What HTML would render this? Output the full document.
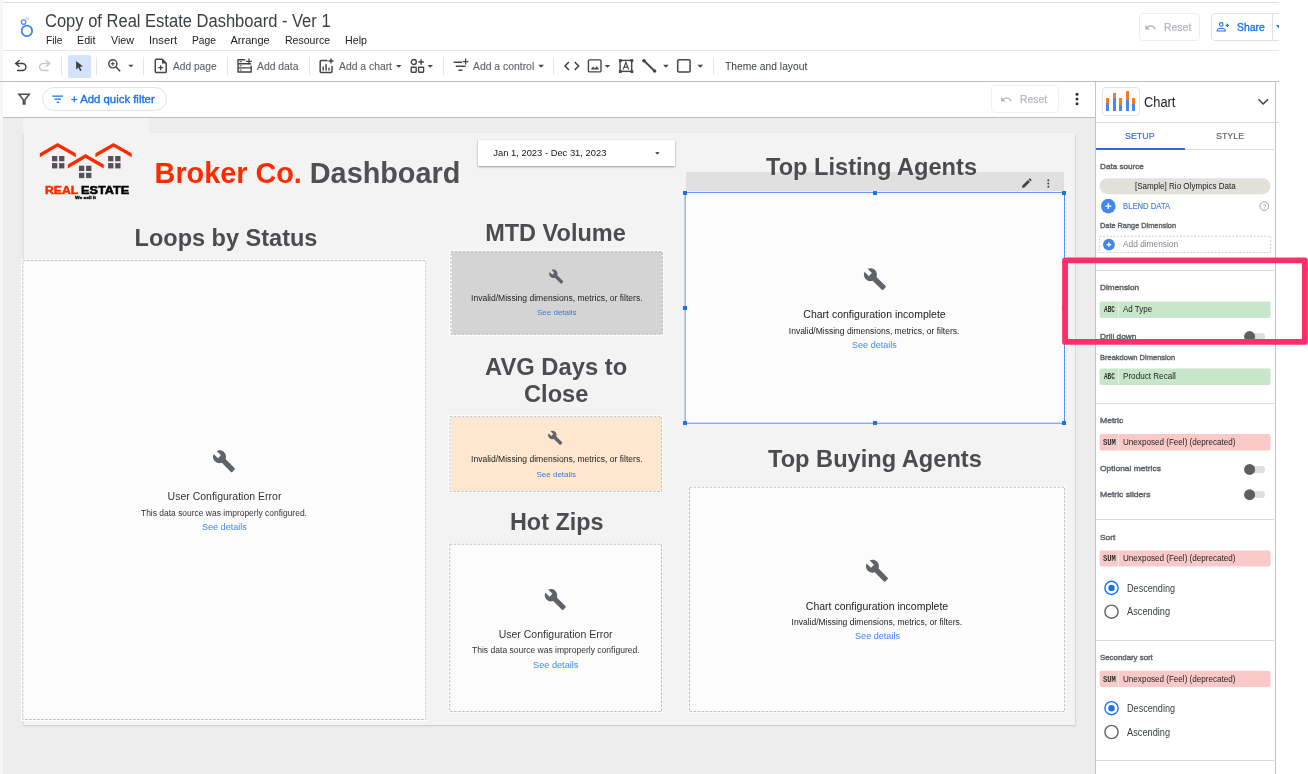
<!DOCTYPE html>
<html>
<head>
<meta charset="utf-8">
<title>Copy of Real Estate Dashboard - Ver 1</title>
<style>
*{box-sizing:border-box;margin:0;padding:0}
html,body{width:1308px;height:774px;overflow:hidden;background:#fff;font-family:"Liberation Sans",sans-serif;}
#root{position:absolute;left:0;top:0;width:1308px;height:774px;overflow:hidden;background:#fff}
.a{position:absolute}
.t{position:absolute;white-space:nowrap;line-height:1;color:#3c4043}
.c{transform:translateX(-50%)}
.hd{font-weight:bold;color:#4d4b50}
.box{position:absolute;background:#fcfcfc}
.lnk{color:#2f75e0}
svg{position:absolute;overflow:visible}
</style>
</head>
<body>
<div id="root">
<div class="a" id="clip" style="left:0;top:0;width:1279px;height:774px;overflow:hidden;will-change:transform">

<!-- ===== app chrome backgrounds ===== -->
<div class="a" style="left:0;top:0;width:3px;height:774px;background:#f4f6f9"></div>
<div class="a" style="left:3px;top:2px;width:1276px;height:1px;background:#dcdedd"></div>
<div class="a" style="left:3px;top:50px;width:1276px;height:1px;background:#e4e6e8"></div>
<div class="a" style="left:0;top:81px;width:1279px;height:1px;background:#b9bec4"></div>
<div class="a" style="left:3px;top:117px;width:1092px;height:1px;background:#b9bcc0"></div>

<!-- canvas -->
<div class="a" id="canvas" style="left:3px;top:118px;width:1092px;height:656px;background:#ededed"></div>
<div class="a" style="left:23px;top:118px;width:126px;height:16px;background:#f3f3f3"></div>
<div class="a" id="page" style="left:23px;top:133px;width:1052px;height:592px;background:#f3f3f3;box-shadow:0.5px 1px 1.5px rgba(0,0,0,.2)"></div>
<div class="a" style="left:22px;top:133px;width:2px;height:592px;background:#e4e4e4"></div>

<!-- right panel -->
<div class="a" id="panel" style="left:1095px;top:82px;width:181px;height:692px;background:#fff;border-left:1px solid #c1c5ca;border-right:1px solid #c1c5ca"></div>

<!-- header -->
<svg style="left:0px;top:0px;" width="60" height="50" viewBox="0 0 60 50"><circle cx="26.9" cy="30.8" r="5.25" fill="none" stroke="#3b82f6" stroke-width="1.8"/><circle cx="23.6" cy="22.1" r="2.200" fill="none" stroke="#4a8df8" stroke-width="1.300"/><circle cx="27.2" cy="18.7" r="1.2" fill="none" stroke="#a9c7fb" stroke-width="0.9"/><path d="M24.6 24.2 L25.6 26" stroke="#5c97f8" stroke-width="1" fill="none"/><path d="M25.4 20.6 L26.3 19.7" stroke="#9bbdfa" stroke-width="0.9" fill="none"/></svg>
<span class="t" style="left:45.0px;top:13.0px;font-size:17.5px;color:#3c4043;transform:scaleX(0.944);transform-origin:0 50%;">Copy of Real Estate Dashboard - Ver 1</span>
<span class="t" style="left:45.5px;top:35.0px;font-size:11px;color:#202124;transform:scaleX(0.930);transform-origin:0 50%;">File</span>
<span class="t" style="left:77.0px;top:35.0px;font-size:11px;color:#202124;transform:scaleX(0.975);transform-origin:0 50%;">Edit</span>
<span class="t" style="left:110.5px;top:35.0px;font-size:11px;color:#202124;transform:scaleX(0.972);transform-origin:0 50%;">View</span>
<span class="t" style="left:148.5px;top:35.0px;font-size:11px;color:#202124;transform:scaleX(1.018);transform-origin:0 50%;">Insert</span>
<span class="t" style="left:191.5px;top:35.0px;font-size:11px;color:#202124;transform:scaleX(0.934);transform-origin:0 50%;">Page</span>
<span class="t" style="left:230.5px;top:35.0px;font-size:11px;color:#202124;">Arrange</span>
<span class="t" style="left:284.5px;top:35.0px;font-size:11px;color:#202124;transform:scaleX(0.956);transform-origin:0 50%;">Resource</span>
<span class="t" style="left:345.0px;top:35.0px;font-size:11px;color:#202124;transform:scaleX(0.972);transform-origin:0 50%;">Help</span>
<div class="a" style="left:1139px;top:13px;width:61px;height:28px;background:#fff;border:1px solid #eceef0;border-radius:4px"></div>
<svg style="left:1144px;top:21px;" width="12.5" height="12.5" viewBox="0 0 24 24"><g transform="translate(0.576,0.384)"><path d="M12.5 8c-2.65 0-5.05.99-6.9 2.6L2 7v9h9l-3.62-3.62c1.39-1.16 3.16-1.88 5.12-1.88 3.54 0 6.55 2.31 7.6 5.5l2.37-.78C21.08 11.03 17.15 8 12.5 8z" fill="#b4b7bb"/></g></svg>
<span class="t" style="left:1164.0px;top:22.0px;font-size:11.5px;color:#b4b7bb;transform:scaleX(0.909);transform-origin:0 50%;-webkit-text-stroke:0.25px #b4b7bb;">Reset</span>
<div class="a" style="left:1211px;top:13px;width:80px;height:28px;background:#fff;border:1px solid #dfe1e5;border-radius:4px"></div>
<div class="a" style="left:1272px;top:14px;width:1px;height:26px;background:#dfe1e5;"></div>
<svg style="left:1216px;top:19px;" width="14" height="14" viewBox="0 0 24 24"><g transform="translate(0.000,1.371)"><circle cx="9" cy="8" r="3.1" fill="none" stroke="#1a73e8" stroke-width="1.9"/><path d="M2 19.2 v-1.2 c0-2.3 4.6-3.6 7-3.6 s7 1.3 7 3.6 v1.2z" fill="none" stroke="#1a73e8" stroke-width="1.9" stroke-linejoin="round"/><path d="M19.5 6.5v6M16.5 9.5h6" stroke="#1a73e8" stroke-width="1.9" fill="none"/></g></svg>
<span class="t" style="left:1236.5px;top:22.0px;font-size:11.5px;color:#1a73e8;transform:scaleX(0.903);transform-origin:0 50%;-webkit-text-stroke:0.35px #1a73e8;">Share</span>
<svg style="left:1276px;top:25px;" width="6" height="4" viewBox="0 0 6 4"><path d="M0 0h6L3 3.6z" fill="#1a73e8"/></svg>
<!-- toolbar -->
<svg style="left:14px;top:59px;" width="14" height="14" viewBox="0 0 14 14"><path d="M5.6 1.2 L1.6 4.5 L5.6 7.8 M1.8 4.5 H8.4 A3.5 3.5 0 0 1 8.4 11.5 H3" fill="none" stroke="#3c4043" stroke-width="1.400"/></svg>
<svg style="left:37px;top:59px;" width="14" height="14" viewBox="0 0 14 14"><g transform="translate(0.500,0.000)"><path d="M8.4 1.2 L12.4 4.5 L8.4 7.8 M12.2 4.5 H5.6 A3.5 3.5 0 0 0 5.6 11.5 H11" fill="none" stroke="#c4c7c5" stroke-width="1.400"/></g></svg>
<div class="a" style="left:61.0px;top:57px;width:1px;height:18px;background:#e3e5e8;"></div>
<div class="a" style="left:68px;top:55px;width:22.5px;height:22.5px;background:#d3e3fd;border-radius:2px"></div>
<svg style="left:75px;top:60px;" width="9" height="11" viewBox="0 0 9 11"><g transform="translate(0.500,0.500)"><path d="M0.6 0.4 L0.6 9 L2.9 6.9 L4.6 10.6 L6.1 9.9 L4.4 6.3 L7.6 6.1 Z" fill="#3c4043"/></g></svg>
<div class="a" style="left:96.2px;top:57px;width:1px;height:18px;background:#e3e5e8;"></div>
<svg style="left:107px;top:58px;" width="14" height="14" viewBox="0 0 14 14"><g transform="translate(0.500,0.500)"><circle cx="5.300" cy="5.300" r="4.100" fill="none" stroke="#444746" stroke-width="1.400"/><path d="M8.300 8.300 L12.700 12.800" stroke="#444746" stroke-width="1.600" fill="none"/><path d="M5.300 3.300v4M3.300 5.300h4" stroke="#444746" stroke-width="1.1" fill="none"/></g></svg>
<svg style="left:128px;top:64px;" width="5.400000000000006" height="2.700000000000003" viewBox="0 0 10 5"><g transform="translate(0.370,1.204)"><path d="M0 0h10L5 5z" fill="#444746"/></g></svg>
<div class="a" style="left:143.2px;top:57px;width:1px;height:18px;background:#e3e5e8;"></div>
<svg style="left:154px;top:58px;" width="14" height="16" viewBox="0 0 14 16"><path d="M2.4 1.3 H8.2 L12.2 5.3 V13.4 A1.1 1.1 0 0 1 11.1 14.5 H2.4 A1.1 1.1 0 0 1 1.3 13.4 V2.4 A1.1 1.1 0 0 1 2.4 1.3 Z" fill="none" stroke="#444746" stroke-width="1.5" stroke-linejoin="round"/><path d="M8 1.3 V5.5 H12.2 Z" fill="#444746"/><path d="M6.7 7.2v5M4.2 9.7h5" stroke="#444746" stroke-width="1.3" fill="none"/></svg>
<span class="t" style="left:173.2px;top:61.0px;font-size:11.5px;color:#5f6368;transform:scaleX(0.885);transform-origin:0 50%;-webkit-text-stroke:0.12px #5f6368;">Add page</span>
<div class="a" style="left:227.3px;top:57px;width:1px;height:18px;background:#e3e5e8;"></div>
<svg style="left:237px;top:58px;" width="16" height="16" viewBox="0 0 16 16"><path d="M8.300 1.700 H1 V14 H14.200 V7.700 M1 5.700 H14.200 M1 9.900 H14.200" fill="none" stroke="#444746" stroke-width="1.400" stroke-linejoin="round"/><path d="M12 0.500v5.800M9.100 3.400h5.800" stroke="#444746" stroke-width="1.300" fill="none"/><path d="M2.700 3.700h2M2.700 7.800h2M2.700 12h2" stroke="#444746" stroke-width="1" fill="none"/></svg>
<span class="t" style="left:257.0px;top:61.0px;font-size:11.5px;color:#5f6368;transform:scaleX(0.901);transform-origin:0 50%;-webkit-text-stroke:0.12px #5f6368;">Add data</span>
<div class="a" style="left:309.2px;top:57px;width:1px;height:18px;background:#e3e5e8;"></div>
<svg style="left:319px;top:58px;" width="15" height="16" viewBox="0 0 15 16"><path d="M8.6 2.6 H2.2 A1 1 0 0 0 1.2 3.6 V13.4 A1 1 0 0 0 2.2 14.4 H12 A1 1 0 0 0 13 13.4 V8" fill="none" stroke="#444746" stroke-width="1.5"/><path d="M12 0.4v5.2M9.4 3h5.2" stroke="#444746" stroke-width="1.4" fill="none"/><path d="M4.2 12.4v-4M7.1 12.4v-6.2M10 12.4v-2.6" stroke="#444746" stroke-width="1.5" fill="none"/></svg>
<span class="t" style="left:338.5px;top:61.0px;font-size:11.5px;color:#5f6368;transform:scaleX(0.901);transform-origin:0 50%;-webkit-text-stroke:0.12px #5f6368;">Add a chart</span>
<svg style="left:396px;top:64px;" width="5.600000000000023" height="2.8000000000000114" viewBox="0 0 10 5"><g transform="translate(0.000,1.607)"><path d="M0 0h10L5 5z" fill="#444746"/></g></svg>
<svg style="left:410px;top:58px;" width="15" height="16" viewBox="0 0 15 16"><circle cx="3.8" cy="4" r="2.5" fill="none" stroke="#444746" stroke-width="1.4"/><path d="M11.1 1.2v5.6M8.3 4h5.6" stroke="#444746" stroke-width="1.4" fill="none"/><rect x="1.2" y="9.2" width="5" height="5" rx="0.6" fill="none" stroke="#444746" stroke-width="1.4"/><rect x="8.6" y="9.2" width="5" height="5" rx="0.6" fill="none" stroke="#444746" stroke-width="1.4"/></svg>
<svg style="left:427px;top:64px;" width="5.399999999999977" height="2.6999999999999886" viewBox="0 0 10 5"><g transform="translate(1.111,1.759)"><path d="M0 0h10L5 5z" fill="#444746"/></g></svg>
<div class="a" style="left:443.2px;top:57px;width:1px;height:18px;background:#e3e5e8;"></div>
<svg style="left:453px;top:58px;" width="16" height="16" viewBox="0 0 16 16"><path d="M0.6 4.3 H9 M2.8 8.3 H12.6 M5.4 12.3 H9.4" stroke="#444746" stroke-width="1.4" fill="none"/><path d="M12.6 0.6v6M9.7 3.6h5.8" stroke="#444746" stroke-width="1.3" fill="none"/></svg>
<span class="t" style="left:472.5px;top:61.0px;font-size:11.5px;color:#5f6368;transform:scaleX(0.903);transform-origin:0 50%;-webkit-text-stroke:0.12px #5f6368;">Add a control</span>
<svg style="left:538px;top:64px;" width="5.7999999999999545" height="2.8999999999999773" viewBox="0 0 10 5"><g transform="translate(0.345,1.466)"><path d="M0 0h10L5 5z" fill="#444746"/></g></svg>
<div class="a" style="left:553.3px;top:57px;width:1px;height:18px;background:#e3e5e8;"></div>
<svg style="left:563px;top:60px;" width="17" height="12" viewBox="0 0 17 12"><g transform="translate(0.500,0.000)"><path d="M5.4 1.900 L1.500 6 L5.400 10.100 M11.200 1.900 L15.100 6 L11.200 10.100" fill="none" stroke="#3c4043" stroke-width="1.500"/></g></svg>
<svg style="left:587px;top:59px;" width="15" height="14" viewBox="0 0 15 14"><g transform="translate(0.500,0.000)"><rect x="0.9" y="0.9" width="12.6" height="12" rx="1.2" fill="none" stroke="#444746" stroke-width="1.4"/><path d="M3.2 10.6 L5.6 7.6 L7.3 9.6 L9.3 7.2 L11.6 10.6 Z" fill="#444746"/></g></svg>
<svg style="left:604px;top:64px;" width="5.600000000000023" height="2.8000000000000114" viewBox="0 0 10 5"><g transform="translate(1.071,1.607)"><path d="M0 0h10L5 5z" fill="#444746"/></g></svg>
<svg style="left:618px;top:59px;" width="15" height="14" viewBox="0 0 15 14"><g transform="translate(0.500,0.000)"><rect x="1.6" y="1.4" width="11.6" height="11" fill="none" stroke="#444746" stroke-width="1.400"/><path d="M4.600 10.600 L7.400 3.400 L10.200 10.600 M5.600 8.200 H9.200" fill="none" stroke="#444746" stroke-width="1.200"/><rect x="0.4" y="0.2" width="2.800" height="2.800" fill="#444746"/><rect x="12" y="0.2" width="2.800" height="2.800" fill="#444746"/><rect x="0.4" y="11.2" width="2.800" height="2.800" fill="#444746"/><rect x="12" y="11.2" width="2.800" height="2.800" fill="#444746"/></g></svg>
<svg style="left:642px;top:59px;" width="15" height="14" viewBox="0 0 15 14"><path d="M2 1.800 L12.600 12" stroke="#444746" stroke-width="1.900" fill="none"/><circle cx="2" cy="1.800" r="1.800" fill="#444746"/><circle cx="12.600" cy="12" r="1.800" fill="#444746"/></svg>
<svg style="left:663px;top:64px;" width="5.7999999999999545" height="2.8999999999999773" viewBox="0 0 10 5"><g transform="translate(0.000,1.466)"><path d="M0 0h10L5 5z" fill="#444746"/></g></svg>
<svg style="left:676px;top:59px;" width="15" height="14" viewBox="0 0 15 14"><g transform="translate(0.500,0.000)"><rect x="1.2" y="0.8" width="12.4" height="12.2" rx="1.2" fill="none" stroke="#444746" stroke-width="1.5"/></g></svg>
<svg style="left:697px;top:64px;" width="5.800000000000068" height="2.900000000000034" viewBox="0 0 10 5"><g transform="translate(0.690,1.466)"><path d="M0 0h10L5 5z" fill="#444746"/></g></svg>
<div class="a" style="left:713.2px;top:57px;width:1px;height:18px;background:#e3e5e8;"></div>
<span class="t" style="left:724.7px;top:61.0px;font-size:11.5px;color:#3c4043;transform:scaleX(0.894);transform-origin:0 50%;">Theme and layout</span>
<!-- filterbar -->
<svg style="left:17px;top:93px;" width="14" height="13" viewBox="0 0 14 13"><path d="M1.900 1.200 H12.300 L7.900 6.700 V11.100 H6.300 V6.700 Z" fill="none" stroke="#4a4d50" stroke-width="1.500" stroke-linejoin="miter"/></svg>
<div class="a" style="left:42px;top:87px;width:125px;height:24px;background:#fff;border:1px solid #dfe1e5;border-radius:12px"></div>
<svg style="left:52px;top:95px;" width="12" height="9" viewBox="0 0 12 9"><path d="M0.3 1.2 H11 M2.4 4.2 H9 M4.6 7.3 H7.1" stroke="#1a73e8" stroke-width="1.3" fill="none"/></svg>
<span class="t" style="left:71.0px;top:94.0px;font-size:10.5px;color:#1a73e8;transform:scaleX(1.082);transform-origin:0 50%;-webkit-text-stroke:0.35px #1a73e8;">+ Add quick filter</span>
<div class="a" style="left:991px;top:85px;width:68px;height:28px;background:#fff;border:1px solid #eef0f2;border-radius:4px"></div>
<svg style="left:1000px;top:93px;" width="12.6" height="12.6" viewBox="0 0 24 24"><g transform="translate(0.000,0.381)"><path d="M12.5 8c-2.65 0-5.05.99-6.9 2.6L2 7v9h9l-3.62-3.62c1.39-1.16 3.16-1.88 5.12-1.88 3.54 0 6.55 2.31 7.6 5.5l2.37-.78C21.08 11.03 17.15 8 12.5 8z" fill="#b4b7bb"/></g></svg>
<span class="t" style="left:1019.5px;top:94.0px;font-size:11.5px;color:#b4b7bb;transform:scaleX(0.902);transform-origin:0 50%;-webkit-text-stroke:0.25px #b4b7bb;">Reset</span>
<svg style="left:1075px;top:92px;" width="4" height="14" viewBox="0 0 4 14"><circle cx="2" cy="2.200" r="1.500" fill="#303134"/><circle cx="2" cy="7" r="1.500" fill="#303134"/><circle cx="2" cy="11.800" r="1.500" fill="#303134"/></svg>
<!-- dash -->
<svg style="left:0px;top:0px;" width="200" height="220" viewBox="0 0 200 220"><path d="M39.8 153.3 L57.6 142.9 L75.8 153.3 V157.3 L57.6 146.8 L39.8 157.3 Z" fill="#ff2a00"/><path d="M95.4 153.3 L113.4 142.9 L131.7 153.3 V157.3 L113.4 146.8 L95.4 157.3 Z" fill="#ff2a00"/><path d="M66.2 169.4 L66.2 162.6 L85.5 151.4 L105.3 162.6 L105.3 169.4 L85.5 158.6 Z" fill="#f3f3f3"/><path d="M67.8 164.4 L85.5 154.1 L103.7 164.4 V168.4 L85.5 158.0 L67.8 168.4 Z" fill="#ff2a00"/><rect x="52.0" y="156.0" width="5.3" height="5.3" fill="#564f57"/><rect x="52.0" y="163.1" width="5.3" height="5.3" fill="#564f57"/><rect x="59.1" y="156.0" width="5.3" height="5.3" fill="#564f57"/><rect x="59.1" y="163.1" width="5.3" height="5.3" fill="#564f57"/><rect x="108.1" y="156.0" width="5.3" height="5.3" fill="#564f57"/><rect x="108.1" y="163.1" width="5.3" height="5.3" fill="#564f57"/><rect x="115.2" y="156.0" width="5.3" height="5.3" fill="#564f57"/><rect x="115.2" y="163.1" width="5.3" height="5.3" fill="#564f57"/><rect x="79.0" y="165.7" width="5.3" height="5.3" fill="#564f57"/><rect x="79.0" y="172.8" width="5.3" height="5.3" fill="#564f57"/><rect x="86.1" y="165.7" width="5.3" height="5.3" fill="#564f57"/><rect x="86.1" y="172.8" width="5.3" height="5.3" fill="#564f57"/></svg>
<span class="t" style="left:45.4px;top:185.0px;font-size:11px;color:#ff2a00;font-weight:bold;transform:scaleX(1.108);transform-origin:0 50%;-webkit-text-stroke:0.55px #ff2a00;">REAL</span>
<span class="t" style="left:80.8px;top:185.0px;font-size:11px;color:#000;font-weight:bold;transform:scaleX(1.152);transform-origin:0 50%;-webkit-text-stroke:0.55px #000;">ESTATE</span>
<span class="t" style="left:74.6px;top:196.0px;font-size:4.2px;color:#000;font-weight:bold;transform:scaleX(1.151);transform-origin:0 50%;-webkit-text-stroke:0.3px #000;">We sell it</span>
<div class="a" style="left:685.6px;top:172px;width:378.4px;height:20px;background:#e0e0e0;"></div>
<span class="t" style="left:154.6px;top:159.0px;font-size:28.8px;color:#ff2a00;font-weight:bold;">Broker Co. <span style="color:#514f54">Dashboard</span></span>
<span class="t" style="left:134.6px;top:227.0px;font-size:23.5px;color:#4d4b50;font-weight:bold;">Loops by Status</span>
<span class="t" style="left:485.2px;top:222.0px;font-size:23.5px;color:#4d4b50;font-weight:bold;">MTD Volume</span>
<span class="t" style="left:484.8px;top:356.0px;font-size:23.5px;color:#4d4b50;font-weight:bold;transform:scaleX(1.011);transform-origin:0 50%;">AVG Days to</span>
<span class="t" style="left:524.2px;top:383.0px;font-size:23.5px;color:#4d4b50;font-weight:bold;transform:scaleX(1.006);transform-origin:0 50%;">Close</span>
<span class="t" style="left:509.8px;top:511.0px;font-size:23.5px;color:#4d4b50;font-weight:bold;transform:scaleX(0.994);transform-origin:0 50%;">Hot Zips</span>
<span class="t" style="left:765.9px;top:156.0px;font-size:23.5px;color:#4d4b50;font-weight:bold;transform:scaleX(1.004);transform-origin:0 50%;">Top Listing Agents</span>
<span class="t" style="left:767.6px;top:448.0px;font-size:23.5px;color:#4d4b50;font-weight:bold;transform:scaleX(1.005);transform-origin:0 50%;">Top Buying Agents</span>
<div class="a" style="left:478px;top:140px;width:197px;height:26px;background:#fff;box-shadow:0 1px 2px rgba(0,0,0,.35),0 0 1px rgba(0,0,0,.15)"></div>
<span class="t" style="left:493.3px;top:148.0px;font-size:9.4px;color:#151515;">Jan 1, 2023 - Dec 31, 2023</span>
<svg style="left:655px;top:152px;" width="4.4" height="2.4" viewBox="0 0 10 5"><g transform="translate(0.455,0.208)"><path d="M0 0h10L5 5z" fill="#222"/></g></svg>
<div class="a" style="left:21.1px;top:258.8px;width:406.4px;height:462.4px;background:#fdfdfd;"></div>
<div class="a" style="left:23.3px;top:261.0px;width:402.0px;height:458.0px;background:#fcfcfc;"></div>
<svg style="left:20px;top:258px;" width="407.0" height="463.0" viewBox="0 0 407.0 463.0"><g transform="translate(0.800,0.500)"><rect x="2" y="2" width="403.0" height="459.0" fill="none" stroke="#c0c4c7" stroke-width="1" stroke-dasharray="2.8 1.2"/></g></svg>
<svg style="left:212px;top:449px;" width="24" height="24" viewBox="0 0 24 24"><g transform="translate(0.000,0.200)"><path d="M22.7 19l-9.1-9.1c.9-2.3.4-5-1.5-6.9-2-2-5-2.4-7.4-1.3L9 6 6 9 1.6 4.7C.4 7.1.9 10.1 2.9 12.1c1.9 1.9 4.6 2.4 6.9 1.5l9.1 9.1c.4.4 1 .4 1.400 0l2.300-2.300c.5-.4.5-1.100.1-1.400z" fill="#5f6368"/></g></svg>
<span class="t" style="left:167.6px;top:491.0px;font-size:10.5px;color:#333;">User Configuration Error</span>
<span class="t" style="left:141.1px;top:509.0px;font-size:8.5px;color:#333;transform:scaleX(0.995);transform-origin:0 50%;">This data source was improperly configured.</span>
<span class="t" style="left:202.0px;top:523.0px;font-size:9.2px;color:#4285f4;transform:scaleX(0.985);transform-origin:0 50%;">See details</span>
<div class="a" style="left:449.3px;top:250.0px;width:214.8px;height:86.0px;background:#fdfdfd;"></div>
<div class="a" style="left:451.5px;top:252.2px;width:210.4px;height:81.6px;background:#d4d4d4;"></div>
<svg style="left:449px;top:249px;" width="215.4" height="86.6" viewBox="0 0 215.4 86.6"><g transform="translate(0.000,0.700)"><rect x="2" y="2" width="211.4" height="82.6" fill="none" stroke="#aeb2b6" stroke-width="1" stroke-dasharray="2.6 1.4"/></g></svg>
<svg style="left:548px;top:268px;" width="15.5" height="15.5" viewBox="0 0 24 24"><g transform="translate(0.774,1.394)"><path d="M22.7 19l-9.1-9.1c.9-2.3.4-5-1.5-6.9-2-2-5-2.4-7.4-1.3L9 6 6 9 1.6 4.7C.4 7.1.9 10.1 2.9 12.1c1.9 1.9 4.6 2.4 6.9 1.5l9.1 9.1c.4.4 1 .4 1.400 0l2.300-2.300c.5-.4.5-1.100.1-1.400z" fill="#5f6368"/></g></svg>
<span class="t" style="left:471.0px;top:294.0px;font-size:8.5px;color:#222;transform:scaleX(1.006);transform-origin:0 50%;">Invalid/Missing dimensions, metrics, or filters.</span>
<span class="t" style="left:537.0px;top:309.0px;font-size:8px;color:#3b78e7;">See details</span>
<div class="a" style="left:448.3px;top:415.0px;width:214.9px;height:78.2px;background:#fdfdfd;"></div>
<div class="a" style="left:450.5px;top:417.2px;width:210.5px;height:73.8px;background:#fee7ce;"></div>
<svg style="left:448px;top:414px;" width="215.5" height="78.8" viewBox="0 0 215.5 78.8"><g transform="translate(0.000,0.700)"><rect x="2" y="2" width="211.5" height="74.8" fill="none" stroke="#bbbfc3" stroke-width="1" stroke-dasharray="2.5 1.5"/></g></svg>
<svg style="left:547px;top:430px;" width="15.5" height="15.5" viewBox="0 0 24 24"><g transform="translate(0.774,0.155)"><path d="M22.7 19l-9.1-9.1c.9-2.3.4-5-1.5-6.9-2-2-5-2.4-7.4-1.3L9 6 6 9 1.6 4.7C.4 7.1.9 10.1 2.9 12.1c1.9 1.9 4.6 2.4 6.9 1.5l9.1 9.1c.4.4 1 .4 1.400 0l2.300-2.300c.5-.4.5-1.100.1-1.400z" fill="#5f6368"/></g></svg>
<span class="t" style="left:471.0px;top:455.0px;font-size:8.5px;color:#222;transform:scaleX(1.006);transform-origin:0 50%;">Invalid/Missing dimensions, metrics, or filters.</span>
<span class="t" style="left:536.5px;top:471.0px;font-size:8px;color:#3b78e7;">See details</span>
<div class="a" style="left:448.0px;top:542.5px;width:215.2px;height:170.8px;background:#fdfdfd;"></div>
<div class="a" style="left:450.2px;top:544.7px;width:210.8px;height:166.4px;background:#fcfcfc;"></div>
<svg style="left:447px;top:542px;" width="215.8" height="171.4" viewBox="0 0 215.8 171.4"><g transform="translate(0.700,0.200)"><rect x="2" y="2" width="211.8" height="167.4" fill="none" stroke="#b8bcc0" stroke-width="1" stroke-dasharray="2.6 1.4"/></g></svg>
<svg style="left:543px;top:588px;" width="23" height="23" viewBox="0 0 24 24"><g transform="translate(0.835,0.000)"><path d="M22.7 19l-9.1-9.1c.9-2.3.4-5-1.5-6.9-2-2-5-2.4-7.4-1.3L9 6 6 9 1.6 4.7C.4 7.1.9 10.1 2.9 12.1c1.9 1.9 4.6 2.4 6.9 1.5l9.1 9.1c.4.4 1 .4 1.400 0l2.300-2.300c.5-.4.5-1.100.1-1.400z" fill="#5f6368"/></g></svg>
<span class="t" style="left:498.7px;top:629.0px;font-size:10.5px;color:#333;">User Configuration Error</span>
<span class="t" style="left:472.0px;top:646.0px;font-size:8.5px;color:#333;transform:scaleX(1.005);transform-origin:0 50%;">This data source was improperly configured.</span>
<span class="t" style="left:533.0px;top:661.0px;font-size:9.2px;color:#4285f4;">See details</span>
<svg style="left:1020px;top:176px;" width="12.6" height="12.6" viewBox="0 0 24 24"><g transform="translate(1.143,1.333)"><path d="M3 17.25V21h3.750L17.810 9.940l-3.750-3.750L3 17.250zM20.710 7.040c.39-.39.39-1.020 0-1.410l-2.340-2.340c-.39-.39-1.020-.39-1.410 0l-1.830 1.830 3.750 3.750 1.830-1.830z" fill="#424242"/></g></svg>
<svg style="left:1047px;top:179px;" width="3" height="10" viewBox="0 0 3 10"><circle cx="1.3" cy="1.300" r="1" fill="#424242"/><circle cx="1.300" cy="4.500" r="1" fill="#424242"/><circle cx="1.300" cy="7.700" r="1" fill="#424242"/></svg>
<div class="a" style="left:684px;top:191.4px;width:381.5px;height:233px;background:#fdfdfd;"></div>
<div class="a" style="left:685.3px;top:192.6px;width:379px;height:230.4px;background:#fcfcfc;"></div>
<svg style="left:683px;top:190px;" width="385" height="237" viewBox="0 0 385 237"><rect x="2.1" y="2.400" width="379.400" height="230.850" fill="none" stroke="#4b8bf5" stroke-width="1"/><rect x="2.1" y="2.400" width="379.400" height="230.850" fill="none" stroke="#fff" stroke-opacity=".22" stroke-width="1" stroke-dasharray="1 3"/></svg>
<div class="a" style="left:683.2px;top:190.9px;width:4px;height:4px;background:#1a73e8;"></div>
<div class="a" style="left:872.9px;top:190.9px;width:4px;height:4px;background:#1a73e8;"></div>
<div class="a" style="left:1062.3px;top:190.9px;width:4px;height:4px;background:#1a73e8;"></div>
<div class="a" style="left:683.2px;top:306px;width:4px;height:4px;background:#1a73e8;"></div>
<div class="a" style="left:1062.3px;top:306px;width:4px;height:4px;background:#1a73e8;"></div>
<div class="a" style="left:683.2px;top:421px;width:4px;height:4px;background:#1a73e8;"></div>
<div class="a" style="left:872.9px;top:421px;width:4px;height:4px;background:#1a73e8;"></div>
<div class="a" style="left:1062.3px;top:421px;width:4px;height:4px;background:#1a73e8;"></div>
<svg style="left:862px;top:267px;" width="24" height="24" viewBox="0 0 24 24"><g transform="translate(0.900,0.100)"><path d="M22.7 19l-9.1-9.1c.9-2.3.4-5-1.5-6.9-2-2-5-2.4-7.4-1.3L9 6 6 9 1.6 4.7C.4 7.1.9 10.1 2.9 12.1c1.9 1.9 4.6 2.4 6.9 1.5l9.1 9.1c.4.4 1 .4 1.400 0l2.300-2.300c.5-.4.5-1.100.1-1.400z" fill="#5f6368"/></g></svg>
<span class="t" style="left:803.3px;top:309.0px;font-size:10.5px;color:#222;">Chart configuration incomplete</span>
<span class="t" style="left:788.8px;top:327.0px;font-size:8.5px;color:#222;">Invalid/Missing dimensions, metrics, or filters.</span>
<span class="t" style="left:852.1px;top:341.0px;font-size:9.2px;color:#4285f4;transform:scaleX(0.987);transform-origin:0 50%;">See details</span>
<div class="a" style="left:687.8px;top:485.5px;width:378.6px;height:227.8px;background:#fdfdfd;"></div>
<div class="a" style="left:690.0px;top:487.7px;width:374.2px;height:223.4px;background:#fcfcfc;"></div>
<svg style="left:687px;top:485px;" width="379.2" height="228.4" viewBox="0 0 379.2 228.4"><g transform="translate(0.500,0.200)"><rect x="2" y="2" width="375.2" height="224.4" fill="none" stroke="#b8bcc0" stroke-width="1" stroke-dasharray="2.6 1.4"/></g></svg>
<svg style="left:865px;top:558px;" width="24" height="24" viewBox="0 0 24 24"><g transform="translate(0.000,0.700)"><path d="M22.7 19l-9.1-9.1c.9-2.3.4-5-1.5-6.9-2-2-5-2.4-7.4-1.3L9 6 6 9 1.6 4.7C.4 7.1.9 10.1 2.9 12.1c1.9 1.9 4.6 2.4 6.9 1.5l9.1 9.1c.4.4 1 .4 1.400 0l2.300-2.300c.5-.4.5-1.100.1-1.400z" fill="#5f6368"/></g></svg>
<span class="t" style="left:805.8px;top:601.0px;font-size:10.5px;color:#222;">Chart configuration incomplete</span>
<span class="t" style="left:791.6px;top:618.0px;font-size:8.5px;color:#222;">Invalid/Missing dimensions, metrics, or filters.</span>
<span class="t" style="left:854.7px;top:632.0px;font-size:9.2px;color:#4285f4;transform:scaleX(0.990);transform-origin:0 50%;">See details</span>
<!-- panel -->
<div class="a" style="left:1096px;top:122px;width:183px;height:1px;background:#d5d8dc;"></div>
<div class="a" style="left:1102px;top:87px;width:38px;height:29px;background:#fff;border:1px solid #e3e3e3;border-radius:4px"></div>
<div class="a" style="left:1106px;top:98px;width:3px;height:4.9px;background:#f57c1f;"></div>
<div class="a" style="left:1106px;top:102.9px;width:3px;height:8.5px;background:#4c86f0;"></div>
<div class="a" style="left:1112.9px;top:93px;width:3px;height:5px;background:#f57c1f;"></div>
<div class="a" style="left:1112.9px;top:98px;width:3px;height:13.4px;background:#4c86f0;"></div>
<div class="a" style="left:1119px;top:98px;width:3px;height:6.5px;background:#f57c1f;"></div>
<div class="a" style="left:1119px;top:104.5px;width:3px;height:6.9px;background:#4c86f0;"></div>
<div class="a" style="left:1125.7px;top:91px;width:3px;height:9px;background:#f57c1f;"></div>
<div class="a" style="left:1125.7px;top:100px;width:3px;height:11.4px;background:#4c86f0;"></div>
<div class="a" style="left:1132.4px;top:97.5px;width:3px;height:6.4px;background:#f57c1f;"></div>
<div class="a" style="left:1132.4px;top:103.9px;width:3px;height:7.5px;background:#4c86f0;"></div>
<span class="t" style="left:1144.2px;top:95.0px;font-size:14px;color:#202124;transform:scaleX(0.917);transform-origin:0 50%;">Chart</span>
<svg style="left:1257px;top:98px;" width="11" height="7" viewBox="0 0 11 7"><g transform="translate(0.700,0.500)"><path d="M0.700 0.800 L5.500 5.600 L10.300 0.800" fill="none" stroke="#3c4043" stroke-width="1.4"/></g></svg>
<div class="a" style="left:1096px;top:149px;width:180px;height:1px;background:#dadce0;"></div>
<div class="a" style="left:1096px;top:148.3px;width:89px;height:2px;background:#3367d6;"></div>
<span class="t" style="left:1125.2px;top:131.0px;font-size:9.5px;color:#3b6fd8;transform:scaleX(0.934);transform-origin:0 50%;-webkit-text-stroke:0.2px #3b6fd8;">SETUP</span>
<span class="t" style="left:1215.9px;top:131.0px;font-size:9.5px;color:#5f6368;transform:scaleX(0.937);transform-origin:0 50%;-webkit-text-stroke:0.15px #5f6368;">STYLE</span>
<span class="t" style="left:1099.7px;top:163.0px;font-size:8.1px;color:#5f6367;transform:scaleX(1.006);transform-origin:0 50%;-webkit-text-stroke:0.42px #5f6367;">Data source</span>
<svg style="left:1099px;top:178px;" width="173" height="17" viewBox="0 0 173 17"><rect x="0.5" y="0.2" width="171" height="16" rx="8" fill="#e3dfdb"/></svg>
<span class="t" style="left:1134.6px;top:182.0px;font-size:9px;color:#202124;transform:scaleX(0.895);transform-origin:0 50%;">[Sample] Rio Olympics Data</span>
<svg style="left:1101px;top:198px;" width="14.6" height="14.6" viewBox="0 0 14.6 14.6"><g transform="translate(0.000,0.800)"><circle cx="7.300" cy="7.300" r="7.300" fill="#4285f4"/><path d="M7.300 4.300v6M4.300 7.300h6" stroke="#fff" stroke-width="1.300" fill="none"/></g></svg>
<span class="t" style="left:1123.0px;top:201.0px;font-size:9.5px;color:#4a80e4;transform:scaleX(0.810);transform-origin:0 50%;-webkit-text-stroke:0.2px #4a80e4;">BLEND DATA</span>
<svg style="left:1259px;top:201px;" width="10" height="10" viewBox="0 0 10 10"><g transform="translate(0.300,0.100)"><circle cx="5" cy="5" r="4.300" fill="none" stroke="#8a8e92" stroke-width="0.800"/></g></svg>
<span class="t" style="left:1262.7px;top:203.0px;font-size:7px;color:#80868b;transform:scaleX(0.845);transform-origin:0 50%;">?</span>
<span class="t" style="left:1099.7px;top:222.0px;font-size:8.1px;color:#5f6367;transform:scaleX(0.908);transform-origin:0 50%;-webkit-text-stroke:0.42px #5f6367;">Date Range Dimension</span>
<svg style="left:1099px;top:235px;" width="173" height="18" viewBox="0 0 173 18"><g transform="translate(0.000,0.800)"><rect x="0.500" y="0.500" width="171.200" height="16.200" fill="#fff" stroke="#c4c4c4" stroke-width="0.800" stroke-dasharray="2 1.500"/></g></svg>
<svg style="left:1103px;top:238px;" width="11.8" height="11.8" viewBox="0 0 11.8 11.8"><g transform="translate(0.000,0.700)"><circle cx="5.900" cy="5.900" r="5.900" fill="#4285f4"/><path d="M5.900 3.500v4.800M3.500 5.900h4.800" stroke="#fff" stroke-width="1.200" fill="none"/></g></svg>
<span class="t" style="left:1123.0px;top:239.0px;font-size:9.5px;color:#80868b;transform:scaleX(0.877);transform-origin:0 50%;">Add dimension</span>
<div class="a" style="left:1096px;top:270px;width:180px;height:1px;background:#dadce0;"></div>
<span class="t" style="left:1099.7px;top:284.0px;font-size:8.1px;color:#5f6367;transform:scaleX(1.022);transform-origin:0 50%;-webkit-text-stroke:0.42px #5f6367;">Dimension</span>
<svg style="left:1099px;top:301px;" width="173" height="16.4" viewBox="0 0 173 16.4"><g transform="translate(0.000,0.500)"><rect x="0.6" y="0" width="171" height="16.4" rx="2" fill="#c8e6c9"/><rect x="19.1" y="0" width="0.9" height="16.4" fill="#fff" fill-opacity=".55"/></g></svg>
<span class="t" style="left:1104.2px;top:306.0px;font-size:8.3px;color:#2e2e2e;font-weight:bold;font-family:'Liberation Mono',monospace;transform:scaleX(0.730);transform-origin:0 50%;">ABC</span>
<span class="t" style="left:1123.0px;top:304.0px;font-size:9.5px;color:#1f1f1f;transform:scaleX(0.842);transform-origin:0 50%;">Ad Type</span>
<span class="t" style="left:1099.7px;top:333.0px;font-size:8.1px;color:#5f6367;transform:scaleX(1.027);transform-origin:0 50%;-webkit-text-stroke:0.42px #5f6367;">Drill down</span>
<div class="a" style="left:1249px;top:333.0px;width:15.5px;height:7.2px;background:#dedede;border-radius:3.6px"></div>
<svg style="left:1244px;top:331px;" width="11.2" height="11.2" viewBox="0 0 11.2 11.2"><circle cx="5.6" cy="5.600" r="5.500" fill="#5e5e5e"/></svg>
<span class="t" style="left:1099.7px;top:354.0px;font-size:8.1px;color:#5f6367;transform:scaleX(0.927);transform-origin:0 50%;-webkit-text-stroke:0.42px #5f6367;">Breakdown Dimension</span>
<svg style="left:1099px;top:368px;" width="173" height="16.6" viewBox="0 0 173 16.6"><g transform="translate(0.000,0.400)"><rect x="0.6" y="0" width="171" height="16.6" rx="2" fill="#c8e6c9"/><rect x="19.1" y="0" width="0.9" height="16.6" fill="#fff" fill-opacity=".55"/></g></svg>
<span class="t" style="left:1104.3px;top:373.0px;font-size:8.3px;color:#2e2e2e;font-weight:bold;font-family:'Liberation Mono',monospace;transform:scaleX(0.723);transform-origin:0 50%;">ABC</span>
<span class="t" style="left:1123.0px;top:371.0px;font-size:9.5px;color:#1f1f1f;transform:scaleX(0.855);transform-origin:0 50%;">Product Recall</span>
<div class="a" style="left:1096px;top:403px;width:180px;height:1px;background:#dadce0;"></div>
<span class="t" style="left:1099.7px;top:417.0px;font-size:8.1px;color:#5f6367;transform:scaleX(1.057);transform-origin:0 50%;-webkit-text-stroke:0.42px #5f6367;">Metric</span>
<svg style="left:1099px;top:434px;" width="173" height="16.4" viewBox="0 0 173 16.4"><g transform="translate(0.000,0.100)"><rect x="0.6" y="0" width="171" height="16.4" rx="2" fill="#f8c9c6"/><rect x="19.1" y="0" width="0.9" height="16.4" fill="#fff" fill-opacity=".55"/></g></svg>
<span class="t" style="left:1102.8px;top:439.0px;font-size:8.3px;color:#2e2e2e;font-weight:bold;font-family:'Liberation Mono',monospace;transform:scaleX(0.864);transform-origin:0 50%;">SUM</span>
<span class="t" style="left:1123.0px;top:437.0px;font-size:9.5px;color:#1f1f1f;transform:scaleX(0.852);transform-origin:0 50%;">Unexposed (Feel) (deprecated)</span>
<span class="t" style="left:1099.7px;top:465.0px;font-size:8.1px;color:#5f6367;transform:scaleX(1.041);transform-origin:0 50%;-webkit-text-stroke:0.42px #5f6367;">Optional metrics</span>
<div class="a" style="left:1249px;top:465.8px;width:15.5px;height:7.2px;background:#dedede;border-radius:3.6px"></div>
<svg style="left:1244px;top:463px;" width="11.2" height="11.2" viewBox="0 0 11.2 11.2"><g transform="translate(0.000,0.800)"><circle cx="5.6" cy="5.600" r="5.500" fill="#5e5e5e"/></g></svg>
<span class="t" style="left:1099.7px;top:491.0px;font-size:8.1px;color:#5f6367;transform:scaleX(1.059);transform-origin:0 50%;-webkit-text-stroke:0.42px #5f6367;">Metric sliders</span>
<div class="a" style="left:1249px;top:491.1px;width:15.5px;height:7.2px;background:#dedede;border-radius:3.6px"></div>
<svg style="left:1244px;top:489px;" width="11.2" height="11.2" viewBox="0 0 11.2 11.2"><g transform="translate(0.000,0.100)"><circle cx="5.6" cy="5.600" r="5.500" fill="#5e5e5e"/></g></svg>
<div class="a" style="left:1096px;top:519px;width:180px;height:1px;background:#dadce0;"></div>
<span class="t" style="left:1099.7px;top:534.0px;font-size:8.1px;color:#5f6367;transform:scaleX(1.036);transform-origin:0 50%;-webkit-text-stroke:0.42px #5f6367;">Sort</span>
<svg style="left:1099px;top:550px;" width="173" height="16.0" viewBox="0 0 173 16.0"><g transform="translate(0.000,0.600)"><rect x="0.6" y="0" width="171" height="16.0" rx="2" fill="#f8c9c6"/><rect x="19.1" y="0" width="0.9" height="16.0" fill="#fff" fill-opacity=".55"/></g></svg>
<span class="t" style="left:1102.8px;top:555.0px;font-size:8.3px;color:#2e2e2e;font-weight:bold;font-family:'Liberation Mono',monospace;transform:scaleX(0.864);transform-origin:0 50%;">SUM</span>
<span class="t" style="left:1123.0px;top:553.0px;font-size:9.5px;color:#1f1f1f;transform:scaleX(0.852);transform-origin:0 50%;">Unexposed (Feel) (deprecated)</span>
<svg style="left:1103px;top:579px;" width="16" height="16" viewBox="0 0 16 16"><g transform="translate(0.500,0.900)"><circle cx="8" cy="8" r="6.600" fill="none" stroke="#1a73e8" stroke-width="1.400"/><circle cx="8" cy="8" r="3.200" fill="#1a73e8"/></g></svg>
<span class="t" style="left:1126.7px;top:583.0px;font-size:10.5px;color:#3c4043;transform:scaleX(0.867);transform-origin:0 50%;">Descending</span>
<svg style="left:1103px;top:603px;" width="16" height="16" viewBox="0 0 16 16"><g transform="translate(0.500,0.700)"><circle cx="8" cy="8" r="6.600" fill="none" stroke="#5f6368" stroke-width="1.400"/></g></svg>
<span class="t" style="left:1126.7px;top:606.0px;font-size:10.5px;color:#3c4043;transform:scaleX(0.879);transform-origin:0 50%;">Ascending</span>
<div class="a" style="left:1096px;top:639.5px;width:180px;height:1px;background:#dadce0;"></div>
<span class="t" style="left:1099.7px;top:654.0px;font-size:8.1px;color:#5f6367;transform:scaleX(0.970);transform-origin:0 50%;-webkit-text-stroke:0.42px #5f6367;">Secondary sort</span>
<svg style="left:1099px;top:670px;" width="173" height="16.1" viewBox="0 0 173 16.1"><g transform="translate(0.000,0.800)"><rect x="0.6" y="0" width="171" height="16.1" rx="2" fill="#f8c9c6"/><rect x="19.1" y="0" width="0.9" height="16.1" fill="#fff" fill-opacity=".55"/></g></svg>
<span class="t" style="left:1102.8px;top:676.0px;font-size:8.3px;color:#2e2e2e;font-weight:bold;font-family:'Liberation Mono',monospace;transform:scaleX(0.864);transform-origin:0 50%;">SUM</span>
<span class="t" style="left:1123.0px;top:674.0px;font-size:9.5px;color:#1f1f1f;transform:scaleX(0.852);transform-origin:0 50%;">Unexposed (Feel) (deprecated)</span>
<svg style="left:1103px;top:700px;" width="16" height="16" viewBox="0 0 16 16"><g transform="translate(0.500,0.200)"><circle cx="8" cy="8" r="6.600" fill="none" stroke="#1a73e8" stroke-width="1.400"/><circle cx="8" cy="8" r="3.200" fill="#1a73e8"/></g></svg>
<span class="t" style="left:1126.7px;top:703.0px;font-size:10.5px;color:#3c4043;transform:scaleX(0.867);transform-origin:0 50%;">Descending</span>
<svg style="left:1103px;top:724px;" width="16" height="16" viewBox="0 0 16 16"><g transform="translate(0.500,0.000)"><circle cx="8" cy="8" r="6.600" fill="none" stroke="#5f6368" stroke-width="1.400"/></g></svg>
<span class="t" style="left:1126.7px;top:727.0px;font-size:10.5px;color:#3c4043;transform:scaleX(0.879);transform-origin:0 50%;">Ascending</span>
<div class="a" style="left:1096px;top:760px;width:180px;height:1px;background:#dadce0;"></div>
</div>
<!-- pink -->
<svg style="left:0;top:0" width="1308" height="774" viewBox="0 0 1308 774"><rect x="1065.050" y="260.400" width="239.850" height="81.500" fill="none" stroke="#fd2f6b" stroke-width="5.850" stroke-linejoin="round"/></svg>

</div>
</body>
</html>
